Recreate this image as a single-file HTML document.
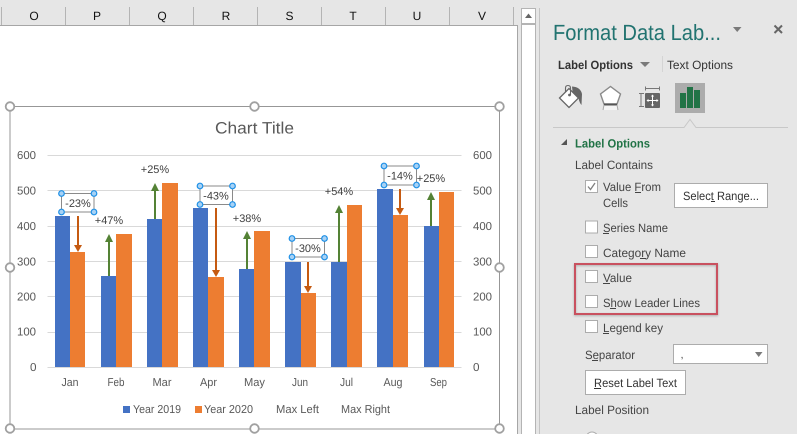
<!DOCTYPE html>
<html>
<head>
<meta charset="utf-8">
<style>
html,body{margin:0;padding:0;width:797px;height:434px;overflow:hidden;background:#e6e6e6}
svg{display:block;position:absolute;left:0;top:0}
text{font-family:"Liberation Sans",sans-serif;text-rendering:geometricPrecision}
.col{font-size:12px;fill:#111;text-anchor:middle}
.ax{font-size:11.5px;fill:#595959}
.dl{font-size:11px;fill:#404040;text-anchor:middle}
.p{font-size:12px;fill:#444}
.h{fill:#a8d2f5;stroke:#1e90e6;stroke-width:1.2}
.hb{fill:#fff;stroke:#a0a0a0;stroke-width:1.8}
.cb{fill:#fff;stroke:#acacac;stroke-width:1}
</style>
</head>
<body>
<svg width="797" height="434" viewBox="0 0 797 434" xmlns="http://www.w3.org/2000/svg">
<defs>
<filter id="sh" x="-5%" y="-5%" width="110%" height="115%"><feDropShadow dx="0" dy="1" stdDeviation="1" flood-color="#000" flood-opacity=".25"/></filter>
</defs>
<rect width="797" height="434" fill="#e6e6e6"/>

<!-- sheet -->
<rect x="0" y="25" width="517" height="409" fill="#fff"/>
<path d="M0 25.5H517.5V434" fill="none" stroke="#a6a6a6" stroke-width="1"/>
<g stroke="#b4b4b4" stroke-width="1">
<path d="M1.5 7V25M65.5 7V25M129.5 7V25M193.5 7V25M257.5 7V25M321.5 7V25M385.5 7V25M449.5 7V25M513.5 7V25"/>
</g>
<text class="col" x="34" y="20">O</text>
<text class="col" x="97" y="20">P</text>
<text class="col" x="162" y="20">Q</text>
<text class="col" x="226" y="20">R</text>
<text class="col" x="289.5" y="20">S</text>
<text class="col" x="353" y="20">T</text>
<text class="col" x="417" y="20">U</text>
<text class="col" x="482" y="20">V</text>

<!-- scrollbar -->
<rect x="521.5" y="8.5" width="14" height="426" fill="#fff" stroke="#b4b4b4"/>
<rect x="522" y="23" width="13" height="2" fill="#b4b4b4"/>
<path d="M525 18L528.5 13.5L532 18Z" fill="#666"/>
<path d="M539.5 8V434" stroke="#c4c4c4" stroke-width="1"/>
<rect x="540" y="0" width="257" height="434" fill="#e6e6e6"/>

<!-- chart frame -->
<rect x="10" y="106.5" width="489.5" height="322.5" fill="#fff" stroke="#979797" stroke-width="1"/>

<!-- gridlines -->
<g stroke="#d9d9d9" stroke-width="1">
<path d="M47.5 155.5H461.5M47.5 190.5H461.5M47.5 226.5H461.5M47.5 261.5H461.5M47.5 296.5H461.5M47.5 332.5H461.5M47.5 367.5H461.5"/>
</g>

<text x="215" y="133.5" font-size="16.5" fill="#595959" textLength="79" lengthAdjust="spacingAndGlyphs">Chart Title</text>

<!-- left axis -->
<text class="ax" x="17" y="159" textLength="19" lengthAdjust="spacingAndGlyphs">600</text>
<text class="ax" x="17" y="194.5" textLength="19" lengthAdjust="spacingAndGlyphs">500</text>
<text class="ax" x="17" y="230" textLength="19" lengthAdjust="spacingAndGlyphs">400</text>
<text class="ax" x="17" y="265.5" textLength="19" lengthAdjust="spacingAndGlyphs">300</text>
<text class="ax" x="17" y="300.5" textLength="19" lengthAdjust="spacingAndGlyphs">200</text>
<text class="ax" x="17" y="335.5" textLength="19" lengthAdjust="spacingAndGlyphs">100</text>
<text class="ax" x="30" y="371" textLength="6.5" lengthAdjust="spacingAndGlyphs">0</text>
<!-- right axis -->
<text class="ax" x="473" y="159" textLength="19" lengthAdjust="spacingAndGlyphs">600</text>
<text class="ax" x="473" y="194.5" textLength="19" lengthAdjust="spacingAndGlyphs">500</text>
<text class="ax" x="473" y="230" textLength="19" lengthAdjust="spacingAndGlyphs">400</text>
<text class="ax" x="473" y="265.5" textLength="19" lengthAdjust="spacingAndGlyphs">300</text>
<text class="ax" x="473" y="300.5" textLength="19" lengthAdjust="spacingAndGlyphs">200</text>
<text class="ax" x="473" y="335.5" textLength="19" lengthAdjust="spacingAndGlyphs">100</text>
<text class="ax" x="473" y="371" textLength="6.5" lengthAdjust="spacingAndGlyphs">0</text>

<!-- bars -->
<g fill="#4472c4">
<rect x="55" y="216" width="15" height="151"/>
<rect x="101" y="276" width="15" height="91"/>
<rect x="147" y="219" width="15" height="148"/>
<rect x="193" y="208" width="15" height="159"/>
<rect x="239" y="269" width="15" height="98"/>
<rect x="285" y="262" width="16" height="105"/>
<rect x="331" y="262" width="16" height="105"/>
<rect x="377" y="189" width="16" height="178"/>
<rect x="424" y="226" width="15" height="141"/>
</g>
<g fill="#ed7d31">
<rect x="70" y="252" width="15" height="115"/>
<rect x="116" y="234" width="16" height="133"/>
<rect x="162" y="183" width="16" height="184"/>
<rect x="208" y="277" width="16" height="90"/>
<rect x="254" y="231" width="16" height="136"/>
<rect x="301" y="293" width="15" height="74"/>
<rect x="347" y="205" width="15" height="162"/>
<rect x="393" y="215" width="15" height="152"/>
<rect x="439" y="192" width="15" height="175"/>
</g>

<!-- arrows orange (down) -->
<g stroke="#c55a11" stroke-width="2" fill="none">
<path d="M78 216V246M216 208V271M308 262V287M400 189V209"/>
</g>
<g fill="#c55a11">
<path d="M74 245H82L78 252Z"/>
<path d="M212 270H220L216 277Z"/>
<path d="M304 286H312L308 293Z"/>
<path d="M396 208H404L400 215Z"/>
</g>
<!-- arrows green (up) -->
<g stroke="#548235" stroke-width="2" fill="none">
<path d="M109 240V276M155 189V219M247 237V269M339 211V262M431 198V226"/>
</g>
<g fill="#548235">
<path d="M105 242H113L109 234Z"/>
<path d="M151 191H159L155 183Z"/>
<path d="M243 239H251L247 231Z"/>
<path d="M335 213H343L339 205Z"/>
<path d="M427 200H435L431 192Z"/>
</g>

<!-- outer data labels -->
<text class="dl" x="109" y="224">+47%</text>
<text class="dl" x="155" y="173">+25%</text>
<text class="dl" x="247" y="222">+38%</text>
<text class="dl" x="339" y="195">+54%</text>
<text class="dl" x="431" y="182">+25%</text>

<!-- selected data labels -->
<g fill="none" stroke="#8a8a8a" stroke-width="1">
<rect x="61.5" y="193.5" width="32.5" height="18.5" fill="#fff"/>
<rect x="200" y="186" width="32.5" height="18.5" fill="#fff"/>
<rect x="384" y="166" width="32.5" height="19" fill="#fff"/>
<rect x="292" y="238.5" width="32.5" height="18.5" fill="#fff"/>
</g>
<text class="dl" x="78" y="207">-23%</text>
<text class="dl" x="216" y="199.5">-43%</text>
<text class="dl" x="400" y="179.5">-14%</text>
<text class="dl" x="308" y="252">-30%</text>
<g class="h">
<circle class="h" cx="61.5" cy="193.5" r="2.8"/><circle class="h" cx="94" cy="193.5" r="2.8"/><circle class="h" cx="61.5" cy="212" r="2.8"/><circle class="h" cx="94" cy="212" r="2.8"/>
<circle class="h" cx="200" cy="186" r="2.8"/><circle class="h" cx="232.5" cy="186" r="2.8"/><circle class="h" cx="200" cy="204.5" r="2.8"/><circle class="h" cx="232.5" cy="204.5" r="2.8"/>
<circle class="h" cx="384" cy="166" r="2.8"/><circle class="h" cx="416.5" cy="166" r="2.8"/><circle class="h" cx="384" cy="185" r="2.8"/><circle class="h" cx="416.5" cy="185" r="2.8"/>
<circle class="h" cx="292" cy="238.5" r="2.8"/><circle class="h" cx="324.5" cy="238.5" r="2.8"/><circle class="h" cx="292" cy="257" r="2.8"/><circle class="h" cx="324.5" cy="257" r="2.8"/>
</g>

<!-- month labels -->
<g class="ax">
<text class="ax" x="61.5" y="386" textLength="17" lengthAdjust="spacingAndGlyphs">Jan</text>
<text class="ax" x="107.5" y="386" textLength="17" lengthAdjust="spacingAndGlyphs">Feb</text>
<text class="ax" x="152.5" y="386" textLength="19" lengthAdjust="spacingAndGlyphs">Mar</text>
<text class="ax" x="200" y="386" textLength="17" lengthAdjust="spacingAndGlyphs">Apr</text>
<text class="ax" x="244" y="386" textLength="21" lengthAdjust="spacingAndGlyphs">May</text>
<text class="ax" x="292" y="386" textLength="16" lengthAdjust="spacingAndGlyphs">Jun</text>
<text class="ax" x="340" y="386" textLength="13" lengthAdjust="spacingAndGlyphs">Jul</text>
<text class="ax" x="383.5" y="386" textLength="19" lengthAdjust="spacingAndGlyphs">Aug</text>
<text class="ax" x="430" y="386" textLength="17" lengthAdjust="spacingAndGlyphs">Sep</text>
</g>

<!-- legend -->
<rect x="123" y="406" width="7" height="7" fill="#4472c4"/>
<text class="ax" x="133" y="413" textLength="48" lengthAdjust="spacingAndGlyphs">Year 2019</text>
<rect x="195" y="406" width="7" height="7" fill="#ed7d31"/>
<text class="ax" x="204" y="413" textLength="49" lengthAdjust="spacingAndGlyphs">Year 2020</text>
<text class="ax" x="276" y="413" textLength="43" lengthAdjust="spacingAndGlyphs">Max Left</text>
<text class="ax" x="341" y="413" textLength="49" lengthAdjust="spacingAndGlyphs">Max Right</text>

<!-- frame handles -->
<circle class="hb" cx="10" cy="106.5" r="4.3"/>
<circle class="hb" cx="254.5" cy="106.5" r="4.3"/>
<circle class="hb" cx="499.5" cy="106.5" r="4.3"/>
<circle class="hb" cx="10" cy="267.5" r="4.3"/>
<circle class="hb" cx="499.5" cy="267.5" r="4.3"/>
<circle class="hb" cx="10" cy="428.5" r="4.3"/>
<circle class="hb" cx="254.5" cy="428.5" r="4.3"/>
<circle class="hb" cx="499.5" cy="428.5" r="4.3"/>

<!-- PANEL -->
<text x="553" y="40" font-size="22" fill="#217370" textLength="168" lengthAdjust="spacingAndGlyphs">Format Data Lab...</text>
<path d="M733 27H741.5L737.2 32Z" fill="#7a7a7a"/>
<path d="M774.5 25.5L782 33M782 25.5L774.5 33" stroke="#666" stroke-width="2" fill="none"/>

<text x="558" y="69" font-size="12" font-weight="bold" fill="#333" textLength="75" lengthAdjust="spacingAndGlyphs">Label Options</text>
<path d="M640 62H650L645 67Z" fill="#7a7a7a"/>
<path d="M662.5 56V72" stroke="#d4d4d4"/>
<text x="667" y="69" font-size="12" fill="#333" textLength="66" lengthAdjust="spacingAndGlyphs">Text Options</text>

<!-- bucket icon -->
<path d="M559.5 98L569 88.5L578.5 98L569 107.5Z" fill="#fff" stroke="#666" stroke-width="1.3"/>
<path d="M565.5 92V88Q565.5 85.5 568 85.5Q570.5 85.5 570.5 88V95" fill="none" stroke="#666" stroke-width="1.1"/>
<circle cx="569.5" cy="95" r="1.4" fill="#666"/>
<path d="M572 86.5Q580.5 87 582 94L581.5 105Q579.5 103 578.5 98L572.5 91.5Z" fill="#666"/>
<!-- pentagon icon -->
<path d="M604 104L600.5 94L610.5 86.5L620.5 94L617 104V110H604Z" fill="#f4f4f4" stroke="none"/>
<path d="M604 104L600.5 94L610.5 86.5L620.5 94L617 104Z" fill="#fff" stroke="#8a8a8a" stroke-width="1.4"/>
<path d="M604 104.5H617" stroke="#555" stroke-width="2"/>
<path d="M604 105L603 110M617 105L618 110" stroke="#aaa" stroke-width="1"/>
<!-- size icon -->
<path d="M645.5 88.5H659.5M645.5 86.5V90.5M659.5 86.5V90.5" stroke="#777" stroke-width="1" fill="none"/>
<path d="M641 93.5V106.5M639 93.5H644M639 106.5H644" stroke="#777" stroke-width="1" fill="none"/>
<rect x="645" y="93" width="15" height="15" rx="1" fill="#666"/>
<path d="M652.5 95.5V105.5M647.5 100.5H657.5" stroke="#fff" stroke-width="1"/>
<path d="M652.5 94.5l-1.6 2h3.2zM652.5 106.5l-1.6-2h3.2zM646.5 100.5l2-1.6v3.2zM658.5 100.5l-2-1.6v3.2z" fill="#fff"/>
<!-- label options icon -->
<rect x="675" y="83" width="30" height="30" fill="#acacac"/>
<g fill="#217346">
<rect x="680" y="93" width="6" height="15"/>
<rect x="687" y="87" width="6" height="21"/>
<rect x="694" y="90" width="6" height="18"/>
</g>
<!-- tab line -->
<path d="M553 127.5H684L690 119.5L696 127.5H788" fill="none" stroke="#c8c8c8" stroke-width="1"/>

<path d="M561 145H567V139Z" fill="#555"/>
<text x="575" y="147.5" font-size="12" font-weight="bold" fill="#217346" textLength="75" lengthAdjust="spacingAndGlyphs">Label Options</text>
<text class="p" x="575" y="169" textLength="78" lengthAdjust="spacingAndGlyphs">Label Contains</text>

<!-- checkboxes -->
<rect class="cb" x="585.5" y="180.5" width="12" height="12"/>
<path d="M588 186.5L590.5 189.5L595 183" fill="none" stroke="#808080" stroke-width="1.3"/>
<text class="p" x="603" y="191" textLength="58" lengthAdjust="spacingAndGlyphs">Value From</text>
<path d="M635 192.5H641" stroke="#444"/>
<text class="p" x="603" y="207" textLength="25" lengthAdjust="spacingAndGlyphs">Cells</text>

<rect x="674.5" y="183.5" width="93" height="24" fill="#fff" stroke="#acacac"/>
<text x="683" y="200" font-size="12" fill="#333" textLength="76" lengthAdjust="spacingAndGlyphs">Select Range...</text>
<path d="M711 201.5H715" stroke="#333"/>

<rect class="cb" x="585.5" y="221" width="12" height="12"/>
<text class="p" x="603" y="232" textLength="65" lengthAdjust="spacingAndGlyphs">Series Name</text>
<path d="M603 233.5H609" stroke="#444"/>

<rect class="cb" x="585.5" y="245.5" width="12" height="12"/>
<text class="p" x="603" y="257" textLength="83" lengthAdjust="spacingAndGlyphs">Category Name</text>
<path d="M640 258.5H646" stroke="#444"/>

<rect class="cb" x="585.5" y="270.5" width="12" height="12"/>
<text class="p" x="603" y="282" textLength="29" lengthAdjust="spacingAndGlyphs">Value</text>
<path d="M603 283.5H610" stroke="#444"/>

<rect class="cb" x="585.5" y="295.5" width="12" height="12"/>
<text class="p" x="603" y="307" textLength="97" lengthAdjust="spacingAndGlyphs">Show Leader Lines</text>
<path d="M610 308.5H616" stroke="#444"/>

<rect x="575" y="264" width="142" height="50" fill="none" stroke="#c9515f" stroke-width="2" filter="url(#sh)"/>

<rect class="cb" x="585.5" y="320.5" width="12" height="12"/>
<text class="p" x="603" y="332" textLength="60" lengthAdjust="spacingAndGlyphs">Legend key</text>
<path d="M603 333.5H609" stroke="#444"/>

<text class="p" x="585" y="359" textLength="50" lengthAdjust="spacingAndGlyphs">Separator</text>
<path d="M592 360.5H598" stroke="#444"/>
<rect x="673.5" y="344.5" width="94" height="19" fill="#fff" stroke="#acacac"/>
<text x="680.5" y="358" font-size="11" fill="#444">,</text>
<path d="M755 352H762.5L758.7 357Z" fill="#7a7a7a"/>

<rect x="585.5" y="370.5" width="100" height="24" fill="#fff" stroke="#acacac"/>
<text x="594" y="387" font-size="12" fill="#333" textLength="83" lengthAdjust="spacingAndGlyphs">Reset Label Text</text>
<path d="M594 388.5H601" stroke="#333"/>

<text class="p" x="575" y="414" textLength="74" lengthAdjust="spacingAndGlyphs">Label Position</text>
<circle cx="592" cy="438" r="6" fill="#fff" stroke="#acacac"/>
</svg>
</body>
</html>
